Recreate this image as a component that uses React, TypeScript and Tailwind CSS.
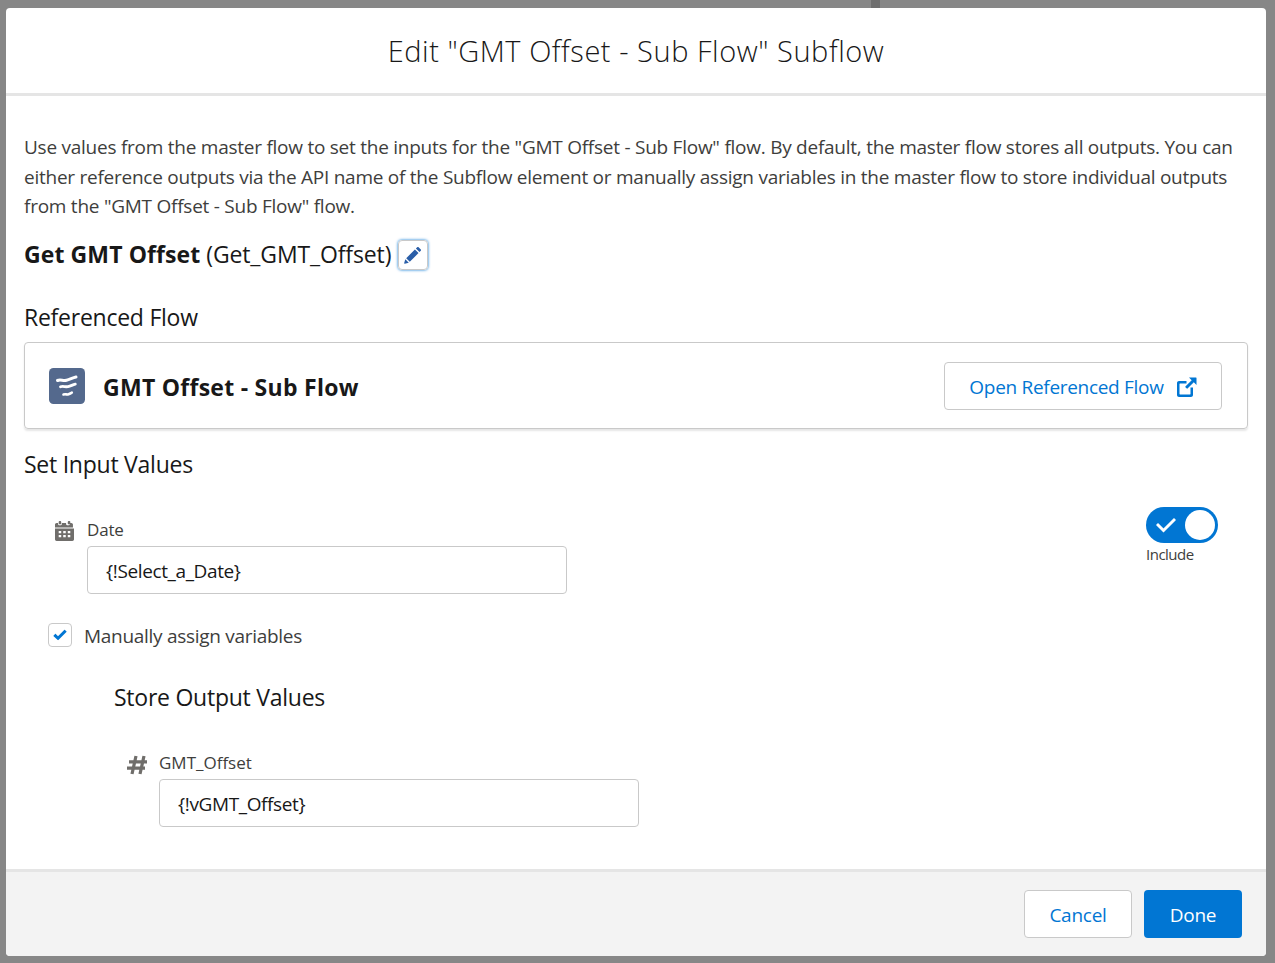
import React from "react";

function Calendar() {
  return (
    <svg viewBox="0 0 18 18" preserveAspectRatio="none" className="w-[19px] h-[20px] mt-[1px]" fill="#706e6b">
      <rect x="3.5" y="0" width="2.4" height="3" rx="0.8" />
      <rect x="12.1" y="0" width="2.4" height="3" rx="0.8" />
      <path d="M1.5 1.7h1.4v1c0 .8.6 1.2 1.8 1.2s1.8-.4 1.8-1.2v-1h4v1c0 .8.6 1.2 1.8 1.2s1.8-.4 1.8-1.2v-1h1.4c.8 0 1.5.7 1.5 1.5v2.6H0V3.2c0-.8.7-1.5 1.5-1.5z" />
      <path fillRule="evenodd" d="M0 6.8h18v9.7c0 .8-.7 1.5-1.5 1.5h-15C.7 18 0 17.3 0 16.5V6.8zM3.5 9v2h2.4V9H3.5zm4.3 0v2h2.4V9H7.8zm4.3 0v2h2.4V9h-2.4zM3.5 12.7v2h2.4v-2H3.5zm4.3 0v2h2.4v-2H7.8zm4.3 0v2h2.4v-2h-2.4z" />
    </svg>
  );
}

function FlowIcon() {
  return (
    <svg viewBox="0 0 36 36" className="w-9 h-9 shrink-0">
      <rect width="36" height="36" rx="4.5" fill="#54698d" />
      <g fill="none" stroke="#fff" strokeLinecap="round">
        <path d="M8.5 12.5c3-1.3 5.500.6 9-.2s6-2.600 9.500-3.300" strokeWidth="3" />
        <path d="M11.500 18.800c2.500-1 4.500.4 7.500-.2s4.500-1.900 7.300-2.400" strokeWidth="2.800" />
        <path d="M14.500 26.500c2-.7 3.200.3 5-.2s2.300-1.100 3.300-1.600" strokeWidth="2.600" />
      </g>
    </svg>
  );
}

export default function App() {
  return (
    <div className="w-[1275px] h-[963px] bg-[#878787] pt-2 pl-1.5 font-['Open_Sans','Noto_Sans',sans-serif] overflow-hidden relative">
      <div className="absolute left-[871px] top-0 w-[9px] h-2 bg-[#6f6f6f]" />
      <div className="w-[1260px] h-[948px] bg-white rounded-[4px] flex flex-col overflow-hidden relative">
        <header className="h-[88px] shrink-0 border-b-[3px] border-[#e5e5e5] flex items-center justify-center">
          <h1 className="text-[29px] leading-none text-[#181818] font-light tracking-[0.54px]">Edit "GMT Offset - Sub Flow" Subflow</h1>
        </header>

        <main className="flex-1 px-[18px] pt-[37px] text-[#181818]">
          <p className="h-[88px] text-[19px] leading-[29.5px] text-[#3e3e3c] tracking-[-0.25px]">
            Use values from the master flow to set the inputs for the "GMT Offset - Sub Flow" flow. By default, the master flow stores all outputs. You can either reference outputs via the API name of the Subflow element or manually assign variables in the master flow to store individual outputs from the "GMT Offset - Sub Flow" flow.
          </p>

          <div className="flex items-center h-8 mt-[18px]">
            <span className="text-[23px] tracking-[-0.12px] -translate-y-[1px]"><b className="font-bold tracking-[0.1px]">Get GMT Offset</b> (Get_GMT_Offset)</span>
            <button className="ml-[7px] w-[30px] h-[30px] rounded-[4px] border border-[#c9c9c9] shadow-[0_0_3px_#0176d3] flex items-center justify-center">
              <svg viewBox="0 0 18 18" className="w-[18px] h-[18px]" fill="#2a5ea8">
                <path d="M14.6 1.2 16.8 3.4c.4.4.4 1 0 1.400l-1.300 1.300-3.600-3.600 1.300-1.300c.4-.4 1-.4 1.400 0zM10.900 3.500l3.600 3.600-8.700 8.700-3.600-3.600 8.700-8.700zM1.300 13.200l3.500 3.500-4 1c-.4.1-.7-.2-.6-.6l1.100-3.900z" />
              </svg>
            </button>
          </div>

          <h2 className="text-[23px] leading-8 mt-[30px] tracking-[-0.25px]">Referenced Flow</h2>

          <section className="mt-[9px] h-[87px] border border-[#c9c9c9] rounded-[4px] shadow-[0_2px_2px_rgba(0,0,0,0.1)] flex items-center pl-6 pr-[25px]">
            <FlowIcon />
            <span className="ml-[18px] pt-[3px] text-[23px] font-bold tracking-[0.27px] flex-1">GMT Offset - Sub Flow</span>
            <button className="w-[278px] h-[48px] rounded-[4px] border border-[#c9c9c9] bg-white text-[#0176d3] text-[19px] tracking-[-0.3px] flex items-center justify-center gap-[13px]">
              <span className="pt-[3px]">Open Referenced Flow</span>
              <svg viewBox="0 0 20 20" className="w-5 h-5 mt-[3px]" fill="#0176d3">
                <path d="M12 .5h7c.3 0 .5.2.5.5v7l-2.700-2.700-6.300 6.300c-.2.2-.5.2-.7 0l-1.400-1.400c-.2-.2-.2-.5 0-.7l6.300-6.300L12 .5z" />
                <path d="M2 4h7.500v2.500H3c-.3 0-.5.2-.5.5v10c0 .3.2.5.5.5h10c.3 0 .5-.2.5-.5v-6.500H16V18c0 1.100-.9 2-2 2H2c-1.100 0-2-.9-2-2V6c0-1.100.9-2 2-2z" />
              </svg>
            </button>
          </section>

          <h2 className="text-[23px] leading-8 mt-[19px] tracking-[-0.25px]">Set Input Values</h2>

          <div className="flex justify-between mt-[27px] pl-[31px] pr-[30px]">
            <div className="pt-[12px]">
              <div className="flex items-center h-[22px] gap-[13px] text-[#3e3e3c]">
                <Calendar />
                <span className="text-[17px] tracking-[-0.2px]">Date</span>
              </div>
              <div className="ml-[32px] mt-[5px] w-[480px] h-[48px] rounded-[4px] border border-[#c9c9c9] flex items-center pl-[18px] pt-[3px] text-[19px] tracking-[-0.38px]">{"{!Select_a_Date}"}</div>
            </div>
            <div className="w-[72px]">
              <div className="w-[72px] h-[36px] rounded-full bg-[#0176d3] relative flex items-center pl-[10px]">
                <svg viewBox="0 0 20 16" className="w-5 h-4" fill="none" stroke="#fff" strokeWidth="3" strokeLinecap="square"><path d="M2 8l5.500 5.500L18 3" /></svg>
                <div className="absolute right-[3px] top-[3px] w-[30px] h-[30px] rounded-full bg-white" />
              </div>
              <div className="text-[15px] leading-5 text-[#3e3e3c] mt-[1px] tracking-[-0.5px]">Include</div>
            </div>
          </div>

          <label className="flex items-center mt-[29px] ml-[24px] h-6">
            <span className="w-6 h-6 rounded-[4px] border border-[#c9c9c9] flex items-center justify-center">
              <svg viewBox="0 0 14 12" className="w-[14px] h-[12px]" fill="#0176d3"><path d="M.6 6.5 2.100 5c.2-.2.5-.2.7 0l2.200 2.300L11.200.9c.2-.2.5-.2.7 0l1.500 1.400c.2.2.2.5 0 .7L5.400 11.100c-.2.2-.5.2-.7 0L.6 7.200c-.2-.2-.2-.5 0-.7z" /></svg>
            </span>
            <span className="ml-3 pt-[3px] text-[19px] tracking-[-0.29px] text-[#3e3e3c]">Manually assign variables</span>
          </label>

          <h2 className="text-[23px] leading-8 mt-[34px] ml-[90px] tracking-[-0.25px] text-[#181818]">Store Output Values</h2>

          <div className="ml-[103px] mt-[39px]">
            <div className="flex items-center h-[22px] text-[#3e3e3c]">
              <svg viewBox="0 0 20 20" className="w-5 h-5 mt-[3px]" fill="none" stroke="#706e6b" strokeWidth="3.2"><path d="M9 1 5 19M17 1l-4 18M2 6.8h18M0 13.200h18" /></svg>
              <span className="ml-[12px] text-[17px] tracking-[0px]">GMT_Offset</span>
            </div>
            <div className="ml-[32px] mt-[5px] w-[480px] h-[48px] rounded-[4px] border border-[#c9c9c9] flex items-center pl-[18px] pt-[3px] text-[19px] tracking-[-0.38px]">{"{!vGMT_Offset}"}</div>
          </div>
        </main>

        <footer className="h-[87px] shrink-0 bg-[#f3f3f3] border-t-[3px] border-[#e5e5e5] flex items-center justify-end gap-3 pr-6">
          <button className="w-[108px] h-[48px] rounded-[4px] border border-[#c9c9c9] bg-white text-[#0176d3] text-[19px] tracking-[-0.25px] pt-[3px]">Cancel</button>
          <button className="w-[98px] h-[48px] rounded-[4px] bg-[#0176d3] text-white text-[19px] tracking-[-0.25px] pt-[3px]">Done</button>
        </footer>
      </div>
    </div>
  );
}
